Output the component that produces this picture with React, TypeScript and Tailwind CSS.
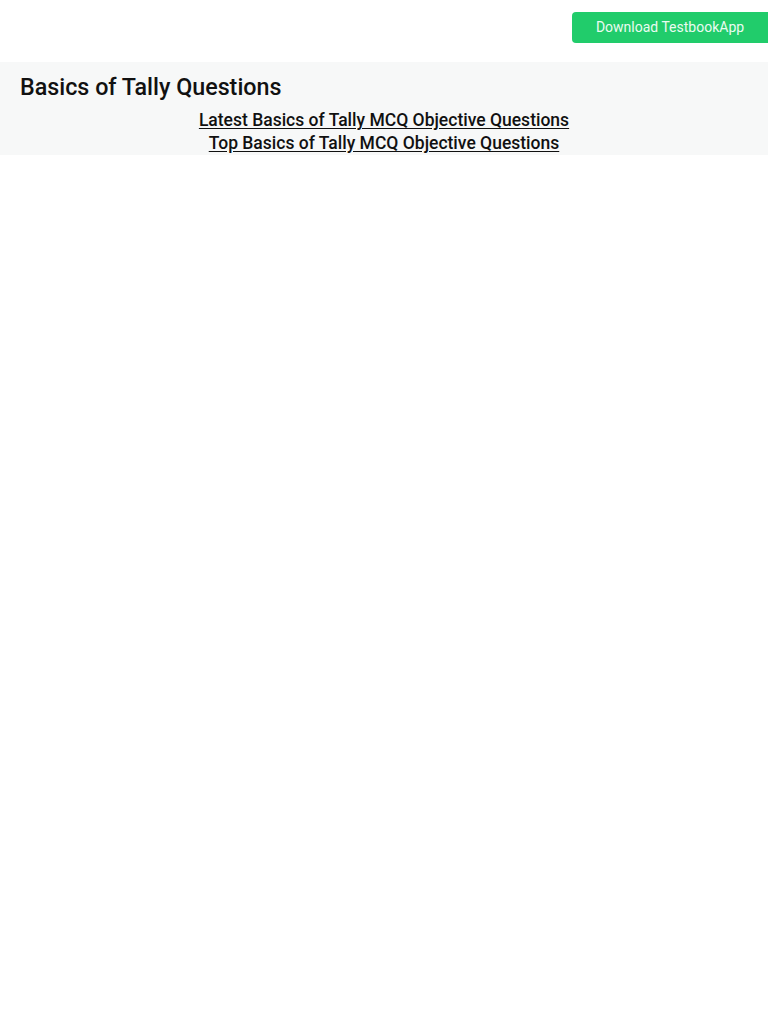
export default function App() {
  return (
    <div className="min-h-[1024px] bg-white font-['Roboto',sans-serif] text-[#111]">
      <header className="flex h-[62px] items-start justify-end pt-3">
        <button className="h-[31px] w-[196px] rounded-l-[4px] bg-[#21cc6b] text-[14px] text-[#eafbf1]">
          Download TestbookApp
        </button>
      </header>
      <section className="h-[93px] bg-[#f7f8f8] px-5 pt-[10px]">
        <h1 className="text-[23.3px] font-medium leading-[30px]">Basics of Tally Questions</h1>
        <div className="mt-[7px] flex flex-col items-center text-[17.5px] font-medium leading-[23px]">
          <a href="#" className="underline underline-offset-2">Latest Basics of Tally MCQ Objective Questions</a>
          <a href="#" className="underline underline-offset-2">Top Basics of Tally MCQ Objective Questions</a>
        </div>
      </section>
    </div>
  );
}
